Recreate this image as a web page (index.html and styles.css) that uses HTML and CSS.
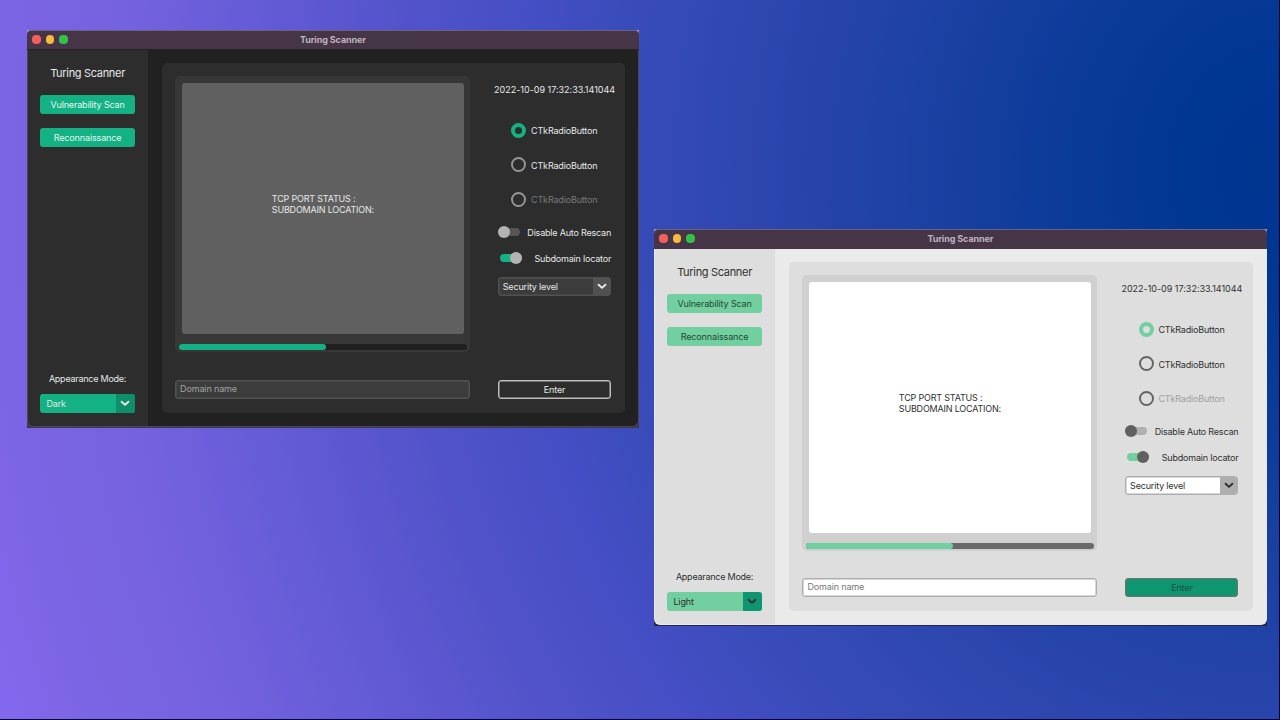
FILE: index.html
```html
<!DOCTYPE html>
<html lang="en">
<head>
<meta charset="utf-8">
<title>Turing Scanner</title>
<link rel="stylesheet" href="styles.css">
</head>
<body>
<div class="desktop">
  <section class="window dark">
    <header class="titlebar">
      <span class="dot red"></span><span class="dot yellow"></span><span class="dot green"></span>
      <h1 class="caption">Turing Scanner</h1>
    </header>
    <div class="content">
      <aside class="sidebar">
        <h2 class="brand">Turing Scanner</h2>
        <button class="nav">Vulnerability Scan</button>
        <button class="nav">Reconnaissance</button>
        <div class="mode-label">Appearance Mode:</div>
        <div class="mode"><span class="mode-value">Dark</span><span class="mode-arrow"><svg class="chevron" viewBox="0 0 10 7"><path d="M1.6 1.7 5 4.9 8.4 1.7"/></svg></span></div>
      </aside>
      <main class="panel">
        <div class="left">
          <div class="frame">
            <div class="output"><p class="status">TCP PORT STATUS :<br>SUBDOMAIN LOCATION:</p></div>
            <div class="progress"><div class="bar"></div></div>
          </div>
          <div class="entry">Domain name</div>
        </div>
        <div class="right">
          <div class="date">2022-10-09 17:32:33.141044</div>
          <div class="radio"><span class="ring on"></span><span class="rlabel">CTkRadioButton</span></div>
          <div class="radio"><span class="ring"></span><span class="rlabel">CTkRadioButton</span></div>
          <div class="radio disabled"><span class="ring"></span><span class="rlabel">CTkRadioButton</span></div>
          <div class="switch"><span class="track"><span class="thumb"></span></span><span class="slabel">Disable Auto Rescan</span></div>
          <div class="switch"><span class="track on"><span class="thumb"></span></span><span class="slabel">Subdomain locator</span></div>
          <div class="combo"><span class="combo-value">Security level</span><span class="combo-arrow"><svg class="chevron" viewBox="0 0 10 7"><path d="M1.6 1.7 5 4.9 8.4 1.7"/></svg></span></div>
          <button class="enter">Enter</button>
        </div>
      </main>
    </div>
  </section>

  <section class="window light">
    <header class="titlebar">
      <span class="dot red"></span><span class="dot yellow"></span><span class="dot green"></span>
      <h1 class="caption">Turing Scanner</h1>
    </header>
    <div class="content">
      <aside class="sidebar">
        <h2 class="brand">Turing Scanner</h2>
        <button class="nav">Vulnerability Scan</button>
        <button class="nav">Reconnaissance</button>
        <div class="mode-label">Appearance Mode:</div>
        <div class="mode"><span class="mode-value">Light</span><span class="mode-arrow"><svg class="chevron" viewBox="0 0 10 7"><path d="M1.6 1.7 5 4.9 8.4 1.7"/></svg></span></div>
      </aside>
      <main class="panel">
        <div class="left">
          <div class="frame">
            <div class="output"><p class="status">TCP PORT STATUS :<br>SUBDOMAIN LOCATION:</p></div>
            <div class="progress"><div class="bar"></div></div>
          </div>
          <div class="entry">Domain name</div>
        </div>
        <div class="right">
          <div class="date">2022-10-09 17:32:33.141044</div>
          <div class="radio"><span class="ring on"></span><span class="rlabel">CTkRadioButton</span></div>
          <div class="radio"><span class="ring"></span><span class="rlabel">CTkRadioButton</span></div>
          <div class="radio disabled"><span class="ring"></span><span class="rlabel">CTkRadioButton</span></div>
          <div class="switch"><span class="track"><span class="thumb"></span></span><span class="slabel">Disable Auto Rescan</span></div>
          <div class="switch"><span class="track on"><span class="thumb"></span></span><span class="slabel">Subdomain locator</span></div>
          <div class="combo"><span class="combo-value">Security level</span><span class="combo-arrow"><svg class="chevron" viewBox="0 0 10 7"><path d="M1.6 1.7 5 4.9 8.4 1.7"/></svg></span></div>
          <button class="enter">Enter</button>
        </div>
      </main>
    </div>
  </section>
</div>
</body>
</html>
```
FILE: styles.css
```css
* { box-sizing: border-box; margin: 0; padding: 0; }
body { width: 1280px; height: 720px; overflow: hidden; background: #02022e; }
button { border: 0; font: inherit; color: inherit; letter-spacing: inherit; }

.desktop {
  position: relative;
  width: 1279px;
  height: 719px;
  background: radial-gradient(1400px 1573px at 1280px 170px, #003590 0%, #003792 7%, #0c3b9a 16.2%, #1840a1 23.6%, #2443a9 31.6%, #3048b1 40.1%, #3a4cba 48.1%, #444ec4 53.8%, #5253ca 63.1%, #665cd7 74.6%, #7562df 83.3%, #7c65e4 91.9%, #8469ee 98%);
  font-family: Inter, "Liberation Sans", sans-serif;
  font-size: 9px;
  line-height: 11px;
  letter-spacing: -0.14px;
}

.window {
  position: absolute;
  height: 398px;
  display: flex;
  flex-direction: column;
  padding-bottom: 1px;
  border-radius: 1px 1px 0 0;
  color: var(--text);
  background: linear-gradient(#b7b0e6 8px, var(--backdrop) 8px);
}
.window.dark {
  left: 27px; top: 30px; width: 612px;
  --text: #e6e8e9; --backdrop: #3d3753; --bg: #212121; --side: #2d2d2d; --panel: #2d2d2d;
  --frame: #373737; --output: #606060; --track: #202020; --accent: #13b184; --accent-dark: #0f8f69;
  --entry: #3c3c3c; --entry-border: #525252; --hint: #a3a3a3; --ring: #959595; --off: #797979;
  --switch: #565656; --thumb: #b3b3b3; --combo: #3c3c3c; --combo-border: #515151; --arrow: #e8e8e8;
  --enter: #2d2d2d; --enter-border: #bdbdbd; --edge: #4a4a4a; --nav-text: #e4f8f0;
}
.window.light {
  left: 654px; top: 229px; width: 613px; height: 397px;
  --text: #303030; --backdrop: #26264c; --bg: #eaeaea; --side: #dedede; --panel: #dedede;
  --frame: #d0d0d0; --output: #fff; --track: #696969; --accent: #72cf9f; --accent-dark: #0e9670;
  --entry: #fff; --entry-border: #aeaeae; --hint: #777; --ring: #656565; --off: #a0a0a0;
  --switch: #b0b0b0; --thumb: #606060; --combo: #fff; --combo-border: #aeaeae; --arrow: #303030;
  --enter: #0e9670; --enter-border: #5c7a70; --edge: #eaeaea; --nav-text: #1f4a35;
}

.titlebar {
  height: 20px;
  flex: none;
  display: flex;
  align-items: center;
  gap: 5.3px;
  padding: 0 0 1px 5.4px;
  background: #463546;
  border-top: 1px solid #6b6280;
  border-bottom: 1px solid #252225;
  border-radius: 4px 4px 0 0;
}
.light .titlebar { border-bottom-color: #463546; }
.dot { width: 8.2px; height: 8.2px; border-radius: 50%; }
.red { background: #f2605c; }
.yellow { background: #f8ba3e; }
.green { background: #33c148; }
.caption {
  flex: 1;
  padding-right: 46px;
  text-align: center;
  font-size: 9px;
  font-weight: 700;
  letter-spacing: -0.1px;
  color: #c0b2c1;
}

.content {
  flex: 1;
  display: flex;
  padding-bottom: 13.5px;
  background: linear-gradient(90deg, var(--side) 120.5px, var(--bg) 120.5px);
  border: 1px solid var(--edge);
  border-top: 0;
  border-radius: 0 0 6px 6px;
}
.sidebar {
  width: 120.5px;
  flex: none;
  display: flex;
  flex-direction: column;
  padding: 17px 13.8px 0 12.4px;
}
.brand { font-size: 11px; font-weight: 400; line-height: 13px; letter-spacing: -0.32px; text-align: center; margin-bottom: 15px; white-space: nowrap; }
.nav { height: 19px; flex: none; margin-bottom: 13.5px; border-radius: 3px; background: var(--accent); color: var(--nav-text); white-space: nowrap; }
.mode-label { margin-top: auto; margin-bottom: 9.5px; text-align: center; letter-spacing: -0.24px; white-space: nowrap; }
.mode { height: 19px; display: flex; border-radius: 3px; overflow: hidden; background: var(--accent); line-height: 20px; }
.mode-value { flex: 1; padding-left: 6px; }
.mode-arrow { width: 19px; background: var(--accent-dark); display: flex; align-items: center; justify-content: center; }
.chevron { width: 10px; height: 7px; fill: none; stroke: var(--arrow); stroke-width: 1.9; stroke-linecap: round; stroke-linejoin: round; }

.panel {
  display: flex;
  gap: 28px;
  width: 463.5px;
  margin: 13px 0 0 13.4px;
  padding: 13px 14px 13.5px 13.2px;
  border-radius: 5px;
  background: var(--panel);
}
.light .panel { margin-left: 13.6px; padding-left: 13.3px; }
.left { width: 295px; flex: none; display: flex; flex-direction: column; justify-content: space-between; }
.frame { height: 276px; padding: 7px 3.2px 2px 3.8px; border-radius: 5px; background: var(--frame); }
.output { height: 251px; margin: 0 3px; border-radius: 3px; background: var(--output); display: flex; align-items: center; justify-content: center; }
.light .output { margin: 0 3.3px 0 2.7px; }
.status { padding-bottom: 10px; letter-spacing: -0.2px; }
.progress { height: 6px; margin-top: 10px; border-radius: 3px; background: var(--track); }
.bar { width: 147px; height: 6px; border-radius: 3px; background: var(--accent); }
.entry { height: 19px; padding-left: 4px; border: 1px solid var(--entry-border); box-shadow: inset 0 0 0 0.5px var(--entry-border); border-radius: 3px; background: var(--entry); color: var(--hint); line-height: 16px; }

.right { width: 113px; flex: none; display: flex; flex-direction: column; }
.date { height: 27px; margin-bottom: 10px; display: flex; align-items: center; justify-content: center; letter-spacing: -0.01px; white-space: nowrap; }
.radio { height: 34.5px; display: flex; align-items: center; gap: 4.7px; padding-left: 13.3px; }
.ring { width: 15px; height: 15px; border: 2px solid var(--ring); border-radius: 50%; }
.ring.on { border: 4.3px solid var(--accent); }
.rlabel { padding-top: 1px; letter-spacing: -0.17px; }
.disabled .rlabel { color: var(--off); }
.switch { height: 25.5px; display: flex; align-items: center; justify-content: space-between; white-space: nowrap; }
.radio + .switch { margin-top: 3.2px; }
.track { width: 22px; height: 8px; display: flex; align-items: center; border-radius: 4px; background: var(--switch); }
.track.on { margin-left: 2px; justify-content: flex-end; background: var(--accent); }
.thumb { width: 12px; height: 12px; flex: none; border-radius: 50%; background: var(--thumb); }
.slabel { padding-top: 1px; letter-spacing: -0.2px; }
.combo { height: 19.5px; margin-top: 6px; display: flex; border: 1px solid var(--combo-border); box-shadow: inset 0 0 0 0.5px var(--combo-border); border-radius: 3px; overflow: hidden; background: var(--combo); line-height: 18px; }
.combo-value { flex: 1; padding-left: 3.7px; letter-spacing: -0.18px; white-space: nowrap; }
.combo-arrow { width: 17px; display: flex; align-items: center; justify-content: center; background: var(--combo-border); }
.enter { height: 19px; margin-top: auto; border: 1px solid var(--enter-border); border-radius: 3px; background: var(--enter); box-shadow: inset 0 0 0 0.5px var(--enter-border); }
.light .enter { color: #17523f; }
```
